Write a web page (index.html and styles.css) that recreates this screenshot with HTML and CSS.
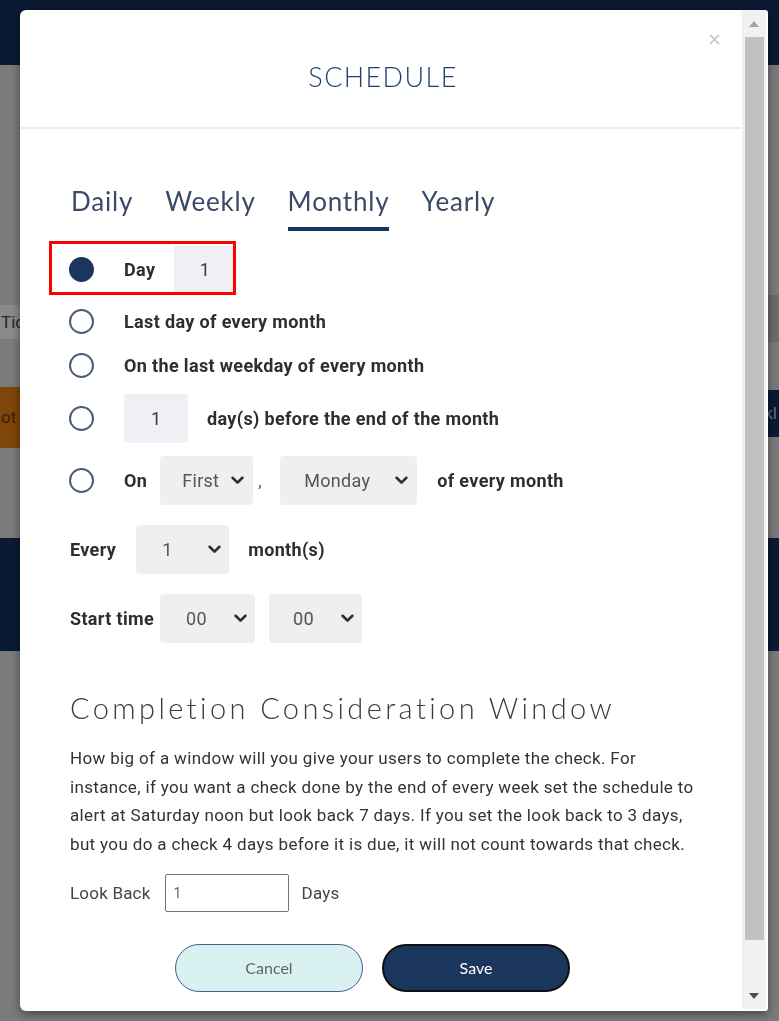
FILE: index.html
```html
<!DOCTYPE html>
<html lang="en">
<head>
<meta charset="utf-8">
<title>Schedule</title>
<link rel="stylesheet" href="styles.css">
</head>
<body>
<div class="page">
  <div class="page-top"></div>
  <div class="page-gap g1"></div>
  <div class="page-row r1"><div class="chip-tic">Tic</div><div class="chip-dark"></div></div>
  <div class="page-gap g2"></div>
  <div class="page-row r2"><div class="chip-orange">ot</div><div class="chip-navy">kl</div></div>
  <div class="page-gap g3"></div>
  <div class="page-band"></div>
</div>

<div class="modal">
  <div class="modal-main">
    <div class="modal-header">
      <h1 class="modal-title">SCHEDULE</h1>
      <span class="modal-close">×</span>
    </div>
    <div class="modal-body">
      <div class="tabs">
        <span class="tab">Daily</span>
        <span class="tab">Weekly</span>
        <span class="tab active">Monthly</span>
        <span class="tab">Yearly</span>
      </div>

      <div class="opt opt-day">
        <span class="radio checked"></span>
        <span class="lbl">Day</span>
        <span class="num num-day">1</span>
        <span class="highlight"></span>
      </div>
      <div class="opt opt-last">
        <span class="radio"></span>
        <span class="lbl">Last day of every month</span>
      </div>
      <div class="opt opt-weekday">
        <span class="radio"></span>
        <span class="lbl">On the last weekday of every month</span>
      </div>
      <div class="opt opt-before">
        <span class="radio"></span>
        <span class="num num-before">1</span>
        <span class="lbl">day(s) before the end of the month</span>
      </div>
      <div class="opt opt-on">
        <span class="radio"></span>
        <span class="lbl">On</span>
        <span class="sel sel-first">First<svg class="chev" viewBox="0 0 12 8"><path d="M1.5 1.5 6 6 10.5 1.5"/></svg></span>
        <span class="comma">,</span>
        <span class="sel sel-monday">Monday<svg class="chev" viewBox="0 0 12 8"><path d="M1.5 1.5 6 6 10.5 1.5"/></svg></span>
        <span class="lbl">of every month</span>
      </div>
      <div class="opt opt-every">
        <span class="lbl">Every</span>
        <span class="sel sel-every">1<svg class="chev" viewBox="0 0 12 8"><path d="M1.5 1.5 6 6 10.5 1.5"/></svg></span>
        <span class="lbl">month(s)</span>
      </div>
      <div class="opt opt-start">
        <span class="lbl">Start time</span>
        <span class="sel sel-hour">00<svg class="chev" viewBox="0 0 12 8"><path d="M1.5 1.5 6 6 10.5 1.5"/></svg></span>
        <span class="sel sel-min">00<svg class="chev" viewBox="0 0 12 8"><path d="M1.5 1.5 6 6 10.5 1.5"/></svg></span>
      </div>

      <h2 class="ccw-title">Completion Consideration Window</h2>
      <p class="ccw-text">How big of a window will you give your users to complete the check. For instance, if you want a check done by the end of every week set the schedule to alert at Saturday noon but look back 7 days. If you set the look back to 3 days, but you do a check 4 days before it is due, it will not count towards that check.</p>
      <div class="lookback">
        <span class="lb-label">Look Back</span>
        <span class="lb-input">1</span>
        <span class="lb-label">Days</span>
      </div>

      <div class="actions">
        <button class="btn btn-cancel" type="button">Cancel</button>
        <button class="btn btn-save" type="button">Save</button>
      </div>
    </div>
  </div>
  <div class="scrollbar">
    <div class="sb-arrow sb-up"><svg viewBox="0 0 10 6"><path d="M0 6 5 0 10 6Z"/></svg></div>
    <div class="sb-thumb"></div>
    <div class="sb-arrow sb-down"><svg viewBox="0 0 10 6"><path d="M0 0 10 0 5 6Z"/></svg></div>
  </div>
</div>
</body>
</html>
```

FILE: styles.css
```css
* { box-sizing: border-box; }
html, body { margin: 0; padding: 0; }
body {
  width: 779px;
  height: 1021px;
  overflow: hidden;
  background: #7b7b7b;
  font-family: Roboto, "Liberation Sans", sans-serif;
}

/* dimmed page behind the modal */
.page { display: flex; flex-direction: column; }
.page-top { height: 65px; background: #0b1a33; }
.g1 { height: 230px; }
.r1 { height: 47px; display: flex; justify-content: space-between; align-items: flex-start; }
.chip-tic { width: 40px; height: 34px; margin-top: 10px; background: #8a8a8a; color: #1d2633; font-size: 17px; line-height: 34px; padding-left: 1px; }
.chip-dark { width: 40px; height: 47px; background: #6c6c6c; }
.g2 { height: 45px; }
.r2 { height: 61px; display: flex; justify-content: space-between; align-items: flex-start; }
.chip-orange { width: 40px; height: 61px; background: #7f4609; color: #3a2006; font-size: 17px; line-height: 61px; padding-left: 1px; }
.chip-navy { width: 40px; height: 47px; margin-top: 3px; background: #0b1a33; color: #6c7080; font-size: 17px; line-height: 47px; text-align: right; padding-right: 2px; }
.g3 { height: 90px; }
.page-band { height: 113px; background: #0b1a33; }

/* modal */
.modal {
  position: fixed;
  left: 20px;
  top: 10px;
  width: 748px;
  height: 1001px;
  background: #fff;
  border-radius: 6px 3px 3px 6px;
  box-shadow: 0 3px 10px rgba(0,0,0,0.45);
  display: flex;
  overflow: hidden;
}
.modal-main { flex: 1; display: flex; flex-direction: column; min-width: 0; overflow: hidden; }
.modal-header {
  position: relative;
  flex: none;
  height: 119px;
  border-bottom: 2px solid #ececec;
  display: flex;
  justify-content: center;
}
.modal-title {
  margin: 51px 0 0;
  font-family: Lato, "Open Sans", sans-serif;
  font-weight: 300;
  font-size: 27px;
  letter-spacing: 1.4px;
  line-height: 32px;
  color: #1f3f73;
  padding-left: 4px;
}
.modal-close {
  position: absolute;
  right: 20px;
  top: 17px;
  font-family: "DejaVu Sans", sans-serif;
  font-size: 18px;
  color: #c4c4c4;
  line-height: 24px;
}

.modal-body { flex: none; padding: 0 0 0 50px; display: flex; flex-direction: column; }

.tabs { display: flex; gap: 32px; margin-top: 57px; height: 45px; align-items: flex-start; padding-left: 1px; }
.tab {
  font-family: Lato, "Open Sans", sans-serif;
  font-weight: 400;
  font-size: 26px;
  letter-spacing: 0.8px;
  line-height: 31px;
  color: #3b4a66;
  height: 45px;
}
.tab.active { border-bottom: 4px solid #1b365d; }

.opt { display: flex; align-items: center; position: relative; color: #2e2e2e; }
.lbl { font-weight: 700; font-size: 18px; letter-spacing: 0.35px; white-space: nowrap; }
.radio {
  width: 25px; height: 25px; border-radius: 50%;
  border: 2px solid #4b5b78;
  margin-left: -1px;
  margin-right: 30px;
  flex: none;
}
.radio.checked { background: #1b365d; border-color: #1b365d; }
.num {
  background: #eef0f4;
  border-radius: 4px;
  font-size: 18px;
  color: #3a3a3a;
  display: flex; align-items: center; justify-content: center;
}
.opt-day { margin-top: 15px; height: 46px; }
.num-day { width: 61px; height: 46px; margin-left: 19px; border-radius: 0; }
.highlight {
  position: absolute;
  left: -21px; top: -5px;
  width: 187px; height: 54px;
  border: 3px solid #ff0000;
}
.opt-last { margin-top: 14px; height: 30px; }
.opt-weekday { margin-top: 14px; height: 30px; }
.opt-before { margin-top: 14px; height: 49px; }
.num-before { width: 64px; height: 49px; margin-right: 19px; }
.opt-on { margin-top: 13px; height: 49px; }
.sel {
  background: #efefef;
  border-radius: 4px;
  height: 49px;
  font-size: 18px;
  letter-spacing: 0.3px;
  color: #555;
  display: flex; align-items: center; justify-content: space-between;
  padding: 0 9px 0 22px;
}
.chev { width: 13px; height: 9px; flex: none; fill: none; stroke: #2e2e2e; stroke-width: 2.4; stroke-linecap: round; stroke-linejoin: round; }
.sel-first { width: 93px; margin-left: 13px; }
.comma { width: 27px; padding-left: 5px; font-size: 17px; color: #555; }
.sel-monday { width: 137px; padding-left: 24px; margin-right: 20px; }
.opt-every { margin-top: 20px; height: 49px; }
.sel-every { width: 93px; margin: 0 19px 0 20px; padding-left: 26px; padding-right: 8px; }
.opt-start { margin-top: 20px; height: 49px; }
.sel-hour { width: 95px; margin-left: 6px; padding-left: 26px; padding-right: 8px; }
.sel-min { width: 93px; margin-left: 14px; padding-left: 24px; padding-right: 8px; }

.ccw-title {
  margin: 47px 0 0;
  font-family: Lato, "Open Sans", sans-serif;
  font-weight: 300;
  font-size: 29px;
  letter-spacing: 3.4px;
  line-height: 36px;
  color: #3a3a3a;
  white-space: nowrap;
}
.ccw-text {
  margin: 18px 0 0;
  width: 634px;
  font-size: 17px;
  letter-spacing: 0.35px;
  line-height: 28.7px;
  color: #333;
}
.lookback { display: flex; align-items: center; margin-top: 15px; height: 38px; }
.lb-label { font-size: 17px; letter-spacing: 0.2px; color: #444; }
.lb-input {
  width: 124px; height: 38px;
  margin: 0 13px 0 14px;
  border: 1px solid #767676;
  border-radius: 2px;
  font-size: 14px; color: #666;
  display: flex; align-items: center; padding-left: 8px;
}

.actions { display: flex; gap: 19px; margin-top: 32px; padding-left: 105px; }
.btn {
  width: 188px; height: 48px;
  border-radius: 25px;
  font-family: Lato, "Open Sans", sans-serif;
  font-size: 16px;
  cursor: pointer;
}
.btn-cancel { background: #d9f1f1; border: 1px solid #41608a; color: #666; }
.btn-save { background: #1b365d; border: 2px solid #111; color: #fff; }

.scrollbar {
  width: 24px;
  margin: 0 2px 2px 0;
  background: #f1f1f1;
  display: flex; flex-direction: column; align-items: center;
}
.sb-arrow { height: 27px; width: 100%; display: flex; align-items: center; justify-content: center; flex: none; }
.sb-arrow svg { width: 10px; height: 6px; }
.sb-up svg { fill: #a3a3a3; }
.sb-down svg { fill: #505050; }
.sb-thumb { width: 19px; flex: 1; background: #c1c1c1; margin-bottom: 42px; }
```
